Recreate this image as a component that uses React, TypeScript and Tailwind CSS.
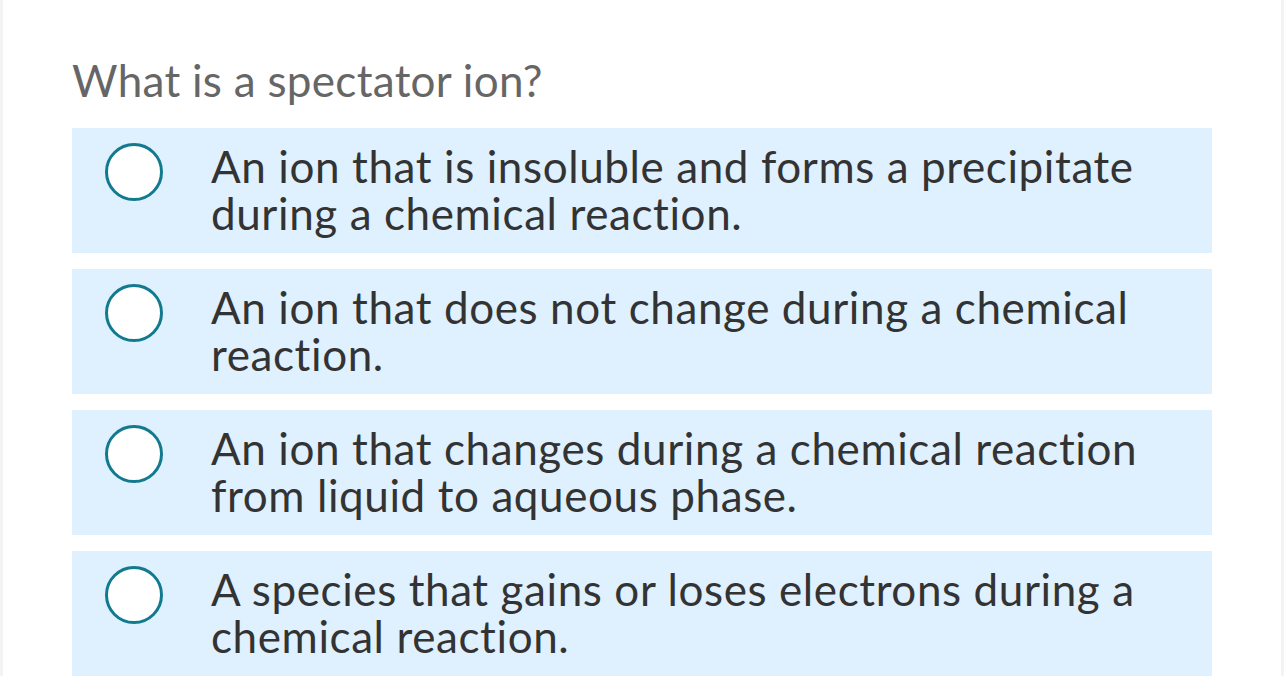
const OPTIONS = [
  ['An ion that is insoluble and forms a precipitate', 'during a chemical reaction.'],
  ['An ion that does not change during a chemical', 'reaction.'],
  ['An ion that changes during a chemical reaction', 'from liquid to aqueous phase.'],
  ['A species that gains or loses electrons during a', 'chemical reaction.'],
];

export default function App() {
  return (
    <div className="h-screen overflow-hidden bg-[#f3f3f3] px-[3px] font-['Lato',sans-serif]">
      <div className="h-full bg-white pl-[69px] pr-[69px] pt-[58px]">
        <h1 className="text-[44px] leading-[44px] tracking-[0.3px] text-[#666666]">What is a spectator ion?</h1>
        <div className="mt-[26px] flex flex-col gap-4">
          {OPTIONS.map(([a, b]) => (
            <label key={a} className="flex h-[125px] items-start bg-[#dff0fe] pl-[33px] pt-[15px]">
              <span className="h-[58px] w-[58px] shrink-0 rounded-full border-[3px] border-[#117a8f] bg-white" />
              <span className="ml-[48px] text-[44px] leading-[47px] tracking-[0.6px] text-[#333333]">
                {a}
                <br />
                {b}
              </span>
            </label>
          ))}
        </div>
      </div>
    </div>
  );
}
